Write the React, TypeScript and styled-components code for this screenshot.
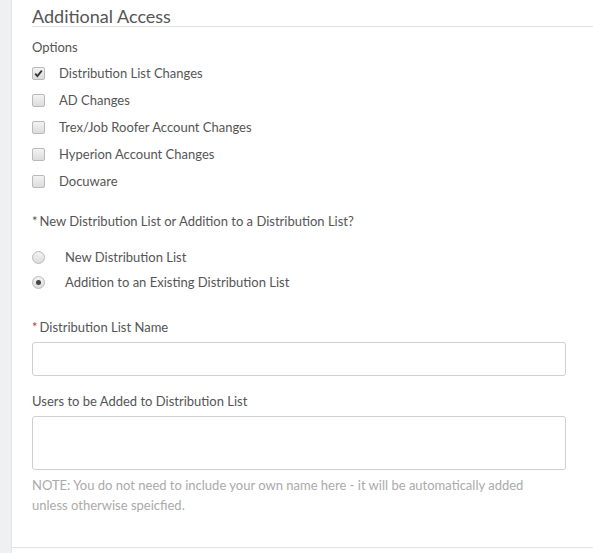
import React, { useState } from "react";
import styled, { createGlobalStyle } from "styled-components";

const GlobalStyle = createGlobalStyle`
    html, body {
        margin: 0;
        padding: 0;
        background: #ffffff;
    }
    body {
        font-family: Lato, "Liberation Sans", sans-serif;
        color: #555;
    }
`;

const Page = styled.div`
    display: flex;
    min-height: 553px;
`;

const Rail = styled.div`
    width: 11px;
    flex: none;
    background: #eef0f1;
    border-right: 1px solid #e3e5e6;
`;

const Main = styled.div`
    flex: 1;
    display: flex;
    flex-direction: column;
`;

const Section = styled.div`
    padding: 0 0 0 20px;
    height: 548px;
    box-sizing: border-box;
    border-bottom: 1px solid #e2e2e2;
`;

const Heading = styled.h3`
    margin: 0;
    padding-top: 6px;
    height: 27px;
    box-sizing: border-box;
    font-size: 18px;
    font-weight: 400;
    line-height: 20px;
    color: #555;
    border-bottom: 1px solid #e0e0e0;
`;

const Body = styled.div`
    padding-right: 27px;
`;

const GroupLabel = styled.div<{ $top: number }>`
    margin-top: ${(p) => p.$top}px;
    font-size: 13px;
    line-height: 18px;
    color: #555;
`;

const Req = styled.span<{ $red?: boolean }>`
    color: ${(p) => (p.$red ? "#c23934" : "#555")};
    margin-right: 2px;
`;

const OptionList = styled.div<{ $gap: number; $top: number }>`
    display: flex;
    flex-direction: column;
    gap: ${(p) => p.$gap}px;
    margin-top: ${(p) => p.$top}px;
`;

const Option = styled.label<{ $indent: number }>`
    display: flex;
    align-items: center;
    height: 18px;
    font-size: 13px;
    color: #555;
    gap: ${(p) => p.$indent}px;
    cursor: pointer;
`;

const Box = styled.span<{ $round?: boolean }>`
    width: 11px;
    height: 11px;
    flex: none;
    border: 1px solid #b9b9b9;
    border-radius: ${(p) => (p.$round ? "50%" : "2px")};
    background: linear-gradient(#f3f3f3, #dcdcdc);
    display: flex;
    align-items: center;
    justify-content: center;
`;

const Dot = styled.span`
    width: 5px;
    height: 5px;
    border-radius: 50%;
    background: #444;
`;

const TextBox = styled.div<{ $h: number }>`
    margin-top: 6px;
    height: ${(p) => p.$h}px;
    box-sizing: border-box;
    border: 1px solid #cfcfcf;
    border-radius: 3px;
    background: #fff;
`;

const Note = styled.p`
    margin: 5px 0 0;
    max-width: 505px;
    font-size: 13px;
    line-height: 20px;
    color: #aaa;
`;

const checks = [
    "Distribution List Changes",
    "AD Changes",
    "Trex/Job Roofer Account Changes",
    "Hyperion Account Changes",
    "Docuware",
];

const radios = ["New Distribution List", "Addition to an Existing Distribution List"];

export default function App() {
    const [checked, setChecked] = useState<boolean[]>([true, false, false, false, false]);
    const [choice, setChoice] = useState(1);

    return (
        <>
            <GlobalStyle />
            <Page>
                <Rail />
                <Main>
                    <Section>
                        <Heading>Additional Access</Heading>
                        <Body>
                            <GroupLabel $top={11}>Options</GroupLabel>
                            <OptionList $gap={9} $top={8}>
                                {checks.map((c, i) => (
                                    <Option
                                        key={c}
                                        $indent={14}
                                        onClick={() => setChecked(checked.map((v, j) => (j === i ? !v : v)))}
                                    >
                                        <Box>
                                            {checked[i] && (
                                                <svg width="9" height="9" viewBox="0 0 9 9">
                                                    <path d="M1.2 4.6 L3.4 7 L7.8 1.6" fill="none" stroke="#333" strokeWidth="1.8" />
                                                </svg>
                                            )}
                                        </Box>
                                        {c}
                                    </Option>
                                ))}
                            </OptionList>

                            <GroupLabel $top={22}>
                                <Req>*</Req>New Distribution List or Addition to a Distribution List?
                            </GroupLabel>
                            <OptionList $gap={7} $top={18}>
                                {radios.map((r, i) => (
                                    <Option key={r} $indent={20} onClick={() => setChoice(i)}>
                                        <Box $round>{choice === i && <Dot />}</Box>
                                        {r}
                                    </Option>
                                ))}
                            </OptionList>

                            <GroupLabel $top={27}>
                                <Req $red>*</Req>Distribution List Name
                            </GroupLabel>
                            <TextBox $h={34} />

                            <GroupLabel $top={16}>Users to be Added to Distribution List</GroupLabel>
                            <TextBox $h={54} />

                            <Note>
                                NOTE: You do not need to include your own name here - it will be automatically added
                                unless otherwise speicfied.
                            </Note>
                        </Body>
                    </Section>
                </Main>
            </Page>
        </>
    );
}
